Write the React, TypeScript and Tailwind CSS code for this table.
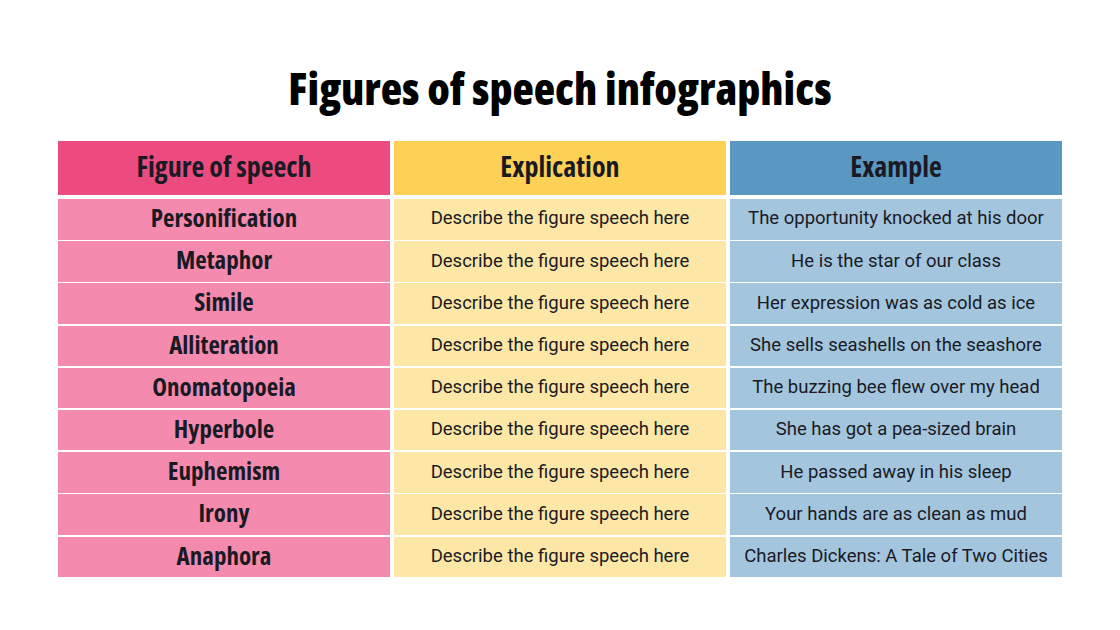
import React from 'react';

const rows: [string, string][] = [
  ['Personification', 'The opportunity knocked at his door'],
  ['Metaphor', 'He is the star of our class'],
  ['Simile', 'Her expression was as cold as ice'],
  ['Alliteration', 'She sells seashells on the seashore'],
  ['Onomatopoeia', 'The buzzing bee flew over my head'],
  ['Hyperbole', 'She has got a pea-sized brain'],
  ['Euphemism', 'He passed away in his sleep'],
  ['Irony', 'Your hands are as clean as mud'],
  ['Anaphora', 'Charles Dickens: A Tale of Two Cities'],
];

const condensed = "font-['Open_Sans',sans-serif] font-stretch-condensed";

export default function App() {
  return (
    <div className="w-[1120px] h-[630px] bg-white overflow-hidden flex flex-col items-center">
      <h1 className={`${condensed} font-extrabold text-[44px] leading-none text-black mt-[66px]`}>
        Figures of speech infographics
      </h1>

      <div className="mt-[31px] w-[1004px] flex flex-col gap-[4px] text-[#1a1a24]">
        {/* Header */}
        <div className="grid grid-cols-3 gap-[4px] h-[54px]">
          <div className={`${condensed} bg-[#ec4b80] flex items-center justify-center pb-[4px] font-bold text-[28px]`}>
            Figure of speech
          </div>
          <div className={`${condensed} bg-[#fdd155] flex items-center justify-center pb-[4px] font-bold text-[28px]`}>
            Explication
          </div>
          <div className={`${condensed} bg-[#5a97c1] flex items-center justify-center pb-[4px] font-bold text-[28px]`}>
            Example
          </div>
        </div>

        {rows.map(([name, example]) => (
          <div key={name} className="grid grid-cols-3 gap-[4px] h-[38.2px]">
            <div className={`${condensed} bg-[#f48aae] flex items-center justify-center pb-[3px] font-bold text-[25px]`}>
              {name}
            </div>
            <div className="bg-[#fde7a6] flex items-center justify-center font-['Roboto',sans-serif] text-[18.5px]">
              Describe the figure speech here
            </div>
            <div className="bg-[#a3c5de] flex items-center justify-center font-['Roboto',sans-serif] text-[18.5px]">
              {example}
            </div>
          </div>
        ))}
      </div>
    </div>
  );
}
